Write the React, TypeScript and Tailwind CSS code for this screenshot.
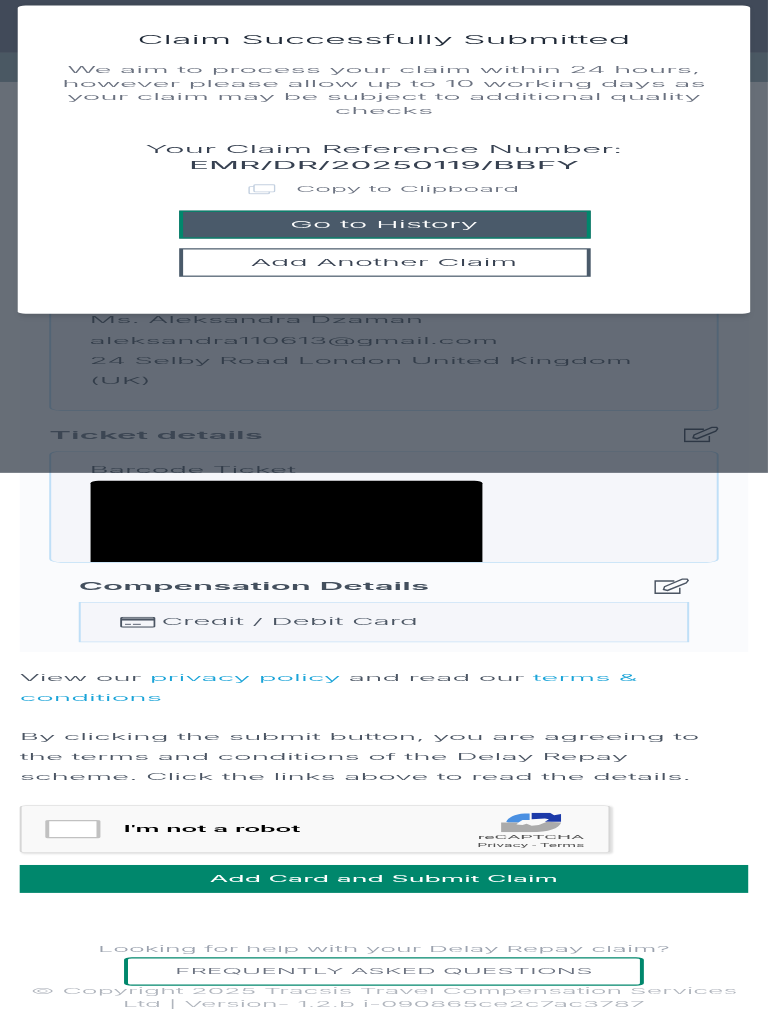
const font = { fontFamily: 'Inter, "Liberation Sans", sans-serif' };

function EditIcon() {
    return (
        <svg viewBox="0 0 36 18" preserveAspectRatio="none" className="w-[18px] h-[28px] shrink-0" fill="none" stroke="#4b5563" strokeWidth="1.5">
            <path d="M21 4H1.500v13h25v-6" />
            <path d="M10 13l1-3L29 2h5l1 1.500-2 2.500-19 8z" />
        </svg>
    );
}

function CardIcon() {
    return (
        <svg viewBox="0 0 36 20" preserveAspectRatio="none" className="w-[18px] h-[18px] shrink-0">
            <rect x="1" y="1" width="34" height="18" rx="2" fill="none" stroke="#4b5563" strokeWidth="2" />
            <rect x="1" y="3" width="34" height="4" fill="#4b5563" />
            <rect x="5" y="13" width="6" height="2" fill="#6b7280" />
            <rect x="13" y="13" width="8" height="2" fill="#6b7280" />
        </svg>
    );
}

function CopyIcon() {
    return (
        <svg viewBox="0 0 28 20" preserveAspectRatio="none" className="w-[14px] h-[18px] shrink-0" fill="none" stroke="#c3d0e0" strokeWidth="1.5">
            <rect x="6" y="1.500" width="21" height="13" rx="1.500" />
            <path d="M6 5H2.500A1.500 1.500 0 0 0 1 6.500v10A1.500 1.500 0 0 0 2.500 18H20a1.500 1.500 0 0 0 1.500-1.500V14.500" />
        </svg>
    );
}

function RecaptchaLogo() {
    return (
        <svg viewBox="0 0 60 30" preserveAspectRatio="none" className="w-[31px] h-[32px]">
            <path d="M6 14C8 7 14 2 24 1h5v10h-7l-4 4H8z" fill="#4a90e2" />
            <path d="M31 0h18l4 4 7-2v12H44l4-4-4-1-13 1z" fill="#1c3aa9" />
            <path d="M1 15h17l-2 3 6 1 4-2 5 3 7-1 8-5 14 1c-2 9-12 15-30 15H1z" fill="#ababab" />
        </svg>
    );
}

export default function App() {
    return (
        <div className="w-[768px] h-[1024px] overflow-hidden bg-white" style={font}>
            <div className="relative w-[390px] h-[1687px] origin-top-left scale-x-[1.969] scale-y-[0.607] text-[#4b5563] text-[15.050px] font-light blur-[0.3px]">
                {/* Header */}
                <div className="h-[87px] bg-[#8990a2]"></div>
                <div className="h-[48px] bg-[#a5bbc1]"></div>

                {/* Claim summary panel */}
                <div className="mx-[9.600px] bg-[#fafbfd] pt-[325px] pb-[16px]">
                    <div className="mx-[15.400px]">
                        <div className="border border-[#bfdff7] rounded-[6px] bg-[#f5f6fa] pl-[19.500px] pr-[20px] pt-[49px] pb-[32px] leading-[33.500px] text-[#5f6875]">
                            <p>Ms. Aleksandra Dzaman</p>
                            <p>aleksandra110613@gmail.com</p>
                            <p>24 Selby Road London United Kingdom (UK)</p>
                        </div>
                        <div className="flex justify-between items-center h-[28px] mt-[24px]">
                            <h3 className="mt-[5px] text-[16.800px] font-semibold text-[#7a8290]">Ticket details</h3>
                            <EditIcon />
                        </div>
                        <div className="mt-[14px] h-[184px] overflow-hidden border border-[#bfdff7] rounded-[6px] bg-[#f5f6fa] pl-[19.500px] pr-[20px] pt-[19px]">
                            <p className="leading-[24px] text-[#5f6875]">Barcode Ticket</p>
                            <div className="mt-[5px] ml-[1px] w-[199px] h-[200px] bg-black rounded-[4px]"></div>
                        </div>
                    </div>
                    <div className="mx-[30.400px] mt-[24px]">
                        <div className="flex justify-between items-center h-[28px]">
                            <h3 className="mt-[4px] text-[16.800px] font-semibold text-[#434f5d]">Compensation Details</h3>
                            <EditIcon />
                        </div>
                        <div className="mt-[13px] h-[66px] border border-[#bfdff7] bg-[#f5f6fa] pl-[20px] flex items-center gap-[3px]">
                            <CardIcon />
                            <span className="text-[15.100px]">Credit / Debit Card</span>
                        </div>
                    </div>
                </div>

                {/* Terms */}
                <div className="pl-[10px] pr-[14px]">
                    <p className="mt-[26px] leading-[33px]">
                        View our <span className="text-[#1ba4d8]">privacy policy</span> and read our <span className="text-[#1ba4d8]">terms &amp; conditions</span>
                    </p>
                    <p className="mt-[31px] leading-[33px]">
                        By clicking the submit button, you are agreeing to the terms and conditions of the Delay Repay scheme. Click the links above to read the details.
                    </p>
                </div>

                {/* Captcha */}
                <div className="ml-[9.600px] mt-[31px] w-[300px] h-[78px] bg-[#f9f9f9] border border-[#d6d6d6] rounded-[3px] shadow-[1px_1px_2px_rgba(0,0,0,0.12)] flex items-center relative">
                    <div className="ml-[12px] w-[28px] h-[30px] bg-white border-2 border-[#c1c1c1] rounded-[2px]"></div>
                    <span className="ml-[12px] text-[14px] text-black font-medium" style={{ fontFamily: 'Roboto, sans-serif' }}>I'm not a robot</span>
                    <div className="absolute right-[11px] top-[11px] w-[56px] flex flex-col items-center" style={{ fontFamily: 'Roboto, sans-serif' }}>
                        <RecaptchaLogo />
                        <span className="mt-[3px] text-[10px] leading-[12px] text-[#555] font-normal">reCAPTCHA</span>
                        <span className="mt-[2px] text-[8px] leading-[10px] text-[#555] font-normal whitespace-nowrap">Privacy - Terms</span>
                    </div>
                </div>

                {/* Submit */}
                <button className="block ml-[9.600px] mt-[20px] w-[370.800px] h-[46px] bg-[#00876c] text-white text-[13.600px] font-normal">Add Card and Submit Claim</button>

                {/* Footer */}
                <p className="mt-[83px] text-center text-[#9ca3af] text-[13.550px] leading-[21px]">Looking for help with your Delay Repay claim?</p>
                <div className="mx-auto mt-[2px] w-[264px] h-[47px] border-2 border-[#00876c] rounded-[4px] flex items-center justify-center text-[13.200px] text-[#6b7280]">FREQUENTLY ASKED QUESTIONS</div>
                <p className="-mt-[1px] px-[12px] text-center text-[#b0b5bd] text-[13.550px] leading-[21px]">© Copyright 2025 Tracsis Travel Compensation Services Ltd | Version- 1.2.b i-090865ce2c7ac3787</p>

                {/* Dark overlay */}
                <div className="absolute top-0 left-0 w-full h-[779px] bg-[#1f2937]/[.68]"></div>

                {/* Success dialog */}
                <div className="absolute top-[9px] left-[9px] w-[372px] h-[508px] bg-white rounded-[4px] text-center pt-[43px] shadow-md">
                    <h2 className="text-[18.200px] leading-[28px] text-[#1f2937]">Claim Successfully Submitted</h2>
                    <p className="mt-[25px] px-[20px] text-[15px] leading-[22px] text-[#6b7280]">We aim to process your claim within 24 hours, however please allow up to 10 working days as your claim may be subject to additional quality checks</p>
                    <p className="mt-[40px] text-[16.850px] leading-[27px] text-[#374151]">Your Claim Reference Number:</p>
                    <p className="text-[16.950px] leading-[27px] font-normal text-[#374151]">EMR/DR/20250119/BBFY</p>
                    <div className="mt-[14px] h-[22px] flex items-center justify-center gap-[10px] text-[13.500px] text-[#6b7280]">
                        <CopyIcon />
                        <span>Copy to Clipboard</span>
                    </div>
                    <button className="block mx-auto mt-[24px] w-[209px] h-[46px] pt-[1px] bg-[#4a5a6a] border-2 border-[#00876c] text-white text-[15.700px]">Go to History</button>
                    <button className="block mx-auto mt-[16px] w-[209px] h-[47px] pt-[1px] bg-white border-2 border-[#4a5a6a] text-[#374151] text-[15.500px]">Add Another Claim</button>
                </div>
            </div>
        </div>
    );
}
